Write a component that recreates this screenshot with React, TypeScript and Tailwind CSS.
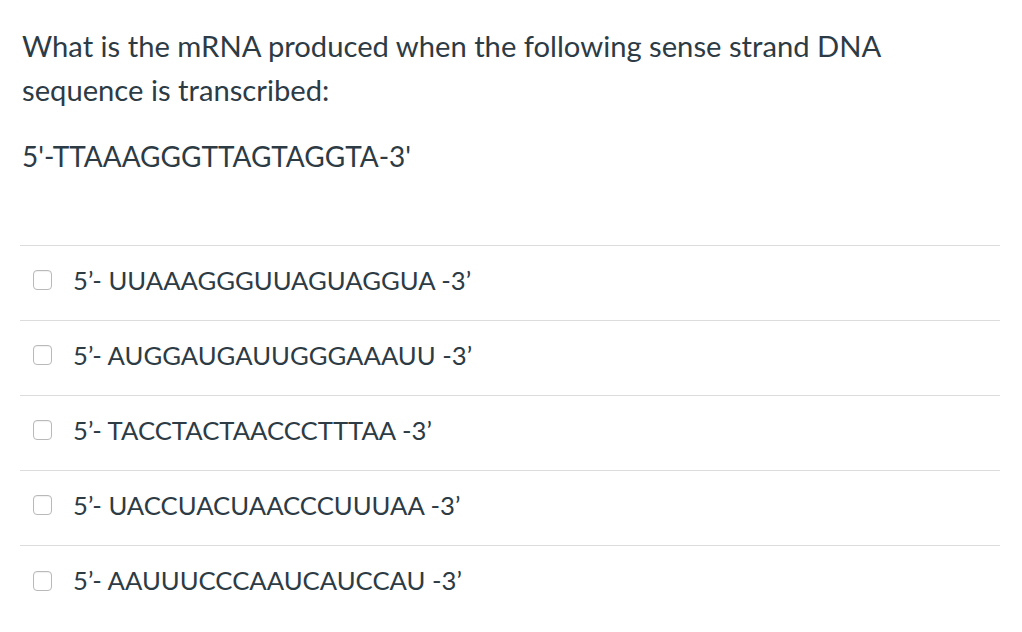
const options = [
  "5’- UUAAAGGGUUAGUAGGUA -3’",
  "5’- AUGGAUGAUUGGGAAAUU -3’",
  "5’- TACCTACTAACCCTTTAA -3’",
  "5’- UACCUACUAACCCUUUAA -3’",
  "5’- AAUUUCCCAAUCAUCCAU -3’",
];

export default function App() {
  return (
    <div className="min-h-[632px] bg-white text-[#2d3b45] font-['Lato','Liberation_Sans',sans-serif]">
      {/* question */}
      <div className="px-[22px] pt-[24px] leading-[44px]">
        <p className="text-[29.2px]">What is the mRNA produced when the following sense strand DNA sequence is transcribed:</p>
        <p className="mt-[22px] text-[28px]">5'-TTAAAGGGTTAGTAGGTA-3'</p>
      </div>

      {/* answers */}
      <div className="mt-[67px] ml-[20px] mr-[22px] border-t border-[#dcdcdc]">
        {options.map((o) => (
          <label key={o} className="flex items-center h-[75px] pb-[6px] border-b border-[#dcdcdc] last:border-b-0 pl-[13px]">
            <span className="w-[19px] h-[20px] rounded-[4px] border border-[#b9b9b9] bg-white shadow-[inset_0_1px_1px_rgba(0,0,0,0.06)]" />
            <span className="ml-[21px] text-[25.7px]">{o}</span>
          </label>
        ))}
      </div>
    </div>
  );
}
